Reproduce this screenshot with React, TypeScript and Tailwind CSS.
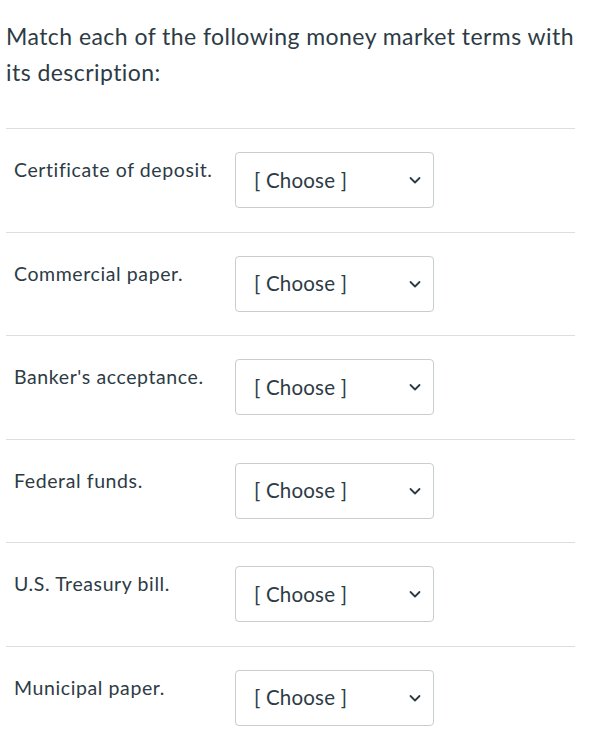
const terms = [
  'Certificate of deposit.',
  'Commercial paper.',
  "Banker's acceptance.",
  'Federal funds.',
  'U.S. Treasury bill.',
  'Municipal paper.',
];

function ChoiceRow({ label }: { label: string }) {
  return (
    <div className="mr-[11px] flex border-t border-[#dcdfe1] pt-[23px] pb-[23.5px]">
      <div className="w-[229px] shrink-0 pl-[8px] pt-[5px] text-[19.5px] leading-[26px] tracking-[0.6px]">{label}</div>
      <div className="flex h-[56px] w-[199px] items-center justify-between rounded-[4px] border border-[#c7cdd1] bg-white pl-[18px] pr-[11px]">
        <span className="text-[20.5px] tracking-[0.2px]">[ Choose ]</span>
        <svg width="14" height="14" viewBox="0 0 14 14" fill="none">
          <path d="M2.5 5 L7 9.5 L11.5 5" stroke="#2d3b45" strokeWidth="1.8" strokeLinecap="round" strokeLinejoin="round" />
        </svg>
      </div>
    </div>
  );
}

export default function App() {
  return (
    <div className="min-h-[748px] bg-white pl-[6px] pr-[6px] text-[#2d3b45]" style={{ fontFamily: 'Lato, "Open Sans", sans-serif' }}>
      <div className="pt-[18px] pb-[38px] text-[23px] leading-[36px] tracking-[0.45px]">
        Match each of the following money market terms with its description:
      </div>
      {terms.map(t => (
        <ChoiceRow key={t} label={t} />
      ))}
    </div>
  );
}
